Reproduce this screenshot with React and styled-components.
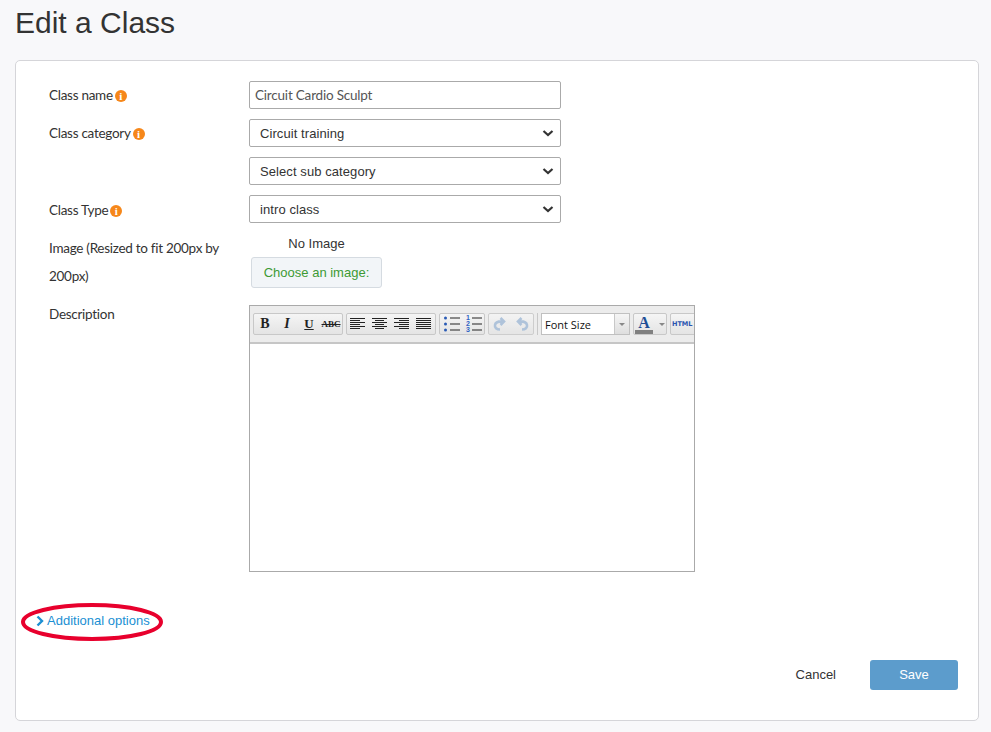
import React from "react";
import styled, { createGlobalStyle } from "styled-components";

const GlobalStyle = createGlobalStyle`
  html, body {
    margin: 0;
    padding: 0;
    background: #f8f8fa;
    font-family: "Liberation Sans", Arial, sans-serif;
    color: #333;
  }
  * { box-sizing: border-box; }
`;

const Page = styled.div`
  width: 991px;
  height: 732px;
  padding: 0 12px 0 15px;
  overflow: hidden;
`;

const Title = styled.h1`
  margin: 0;
  height: 60px;
  padding-top: 5px;
  font-size: 30px;
  line-height: 36px;
  font-weight: 400;
  color: #333;
`;

const Card = styled.div`
  position: relative;
  height: 661px;
  background: #fff;
  border: 1px solid #d5d5d9;
  border-radius: 5px;
  padding: 20px 0 0 33px;
`;

const Form = styled.div`
  display: flex;
  flex-direction: column;
  gap: 10px;
`;

const Row = styled.div`
  display: grid;
  grid-template-columns: 200px 1fr;
  align-items: ${props => (props.top ? "start" : "center")};
  margin-top: ${props => props.offset || 0}px;
`;

const Label = styled.label`
  display: block;
  font-family: Lato, sans-serif;
  font-size: 13.5px;
  line-height: ${props => props.lh || 20}px;
  color: #333;
  letter-spacing: -0.28px;
  padding-top: ${props => props.shift || 0}px;
  margin-top: ${props => props.rise || 0}px;
`;

const Info = styled.span`
  display: inline-block;
  vertical-align: 0;
  margin-left: 2px;
  width: 12px;
  height: 12px;
  border-radius: 50%;
  background: #f6871a;
  color: #fff;
  font: 700 11px/12px "Liberation Serif", serif;
  letter-spacing: 0;
  text-align: center;
`;

const TextInput = styled.div`
  width: 312px;
  height: 28px;
  border: 1px solid #aaa;
  border-radius: 2px;
  padding: 0 5px;
  font-family: Lato, sans-serif;
  font-size: 13.5px;
  letter-spacing: -0.2px;
  line-height: 26px;
  color: #555;
`;

const Select = styled.div`
  width: 312px;
  height: 28px;
  border: 1px solid #aaa;
  border-radius: 2px;
  padding: 0 6px 0 10px;
  display: flex;
  align-items: center;
  justify-content: space-between;
  font-size: 13px;
  letter-spacing: 0.08px;
  color: #333;
`;

const ImageCol = styled.div`
  display: flex;
  flex-direction: column;
  align-items: flex-start;
`;

const NoImage = styled.div`
  width: 135px;
  text-align: center;
  font-size: 13px;
  line-height: 20px;
  margin-bottom: 3px;
  color: #333;
`;

const ChooseButton = styled.button`
  margin-left: 2px;
  width: 131px;
  height: 31px;
  background: #f2f5f8;
  border: 1px solid #d5dbe1;
  border-radius: 3px;
  font-family: "Liberation Sans", Arial, sans-serif;
  font-size: 13px;
  color: #3d9a34;
  padding: 0;
`;

const Editor = styled.div`
  width: 446px;
  height: 267px;
  border: 1px solid #aaa;
  display: flex;
  flex-direction: column;
`;

const Toolbar = styled.div`
  height: 38px;
  flex: none;
  background: #ececec;
  border-bottom: 2px solid #c6c6c6;
  padding: 7px 0 0 3px;
  display: flex;
  gap: 3px;
  overflow: hidden;
`;

const Group = styled.div`
  display: flex;
  height: 22px;
  width: ${props => props.w}px;
  flex: none;
  border: 1px solid #c8c8c8;
  border-radius: 2px;
  background: linear-gradient(#f5f5f5, #e4e4e4);
  align-items: center;
  justify-content: space-around;
  opacity: ${props => (props.off ? 0.85 : 1)};
`;

const Glyph = styled.span`
  width: 22px;
  text-align: center;
  font-family: "Liberation Serif", serif;
  font-size: ${props => props.size || 13}px;
  font-weight: 700;
  font-style: ${props => (props.italic ? "italic" : "normal")};
  text-decoration: ${props => props.deco || "none"};
  color: #222;
  line-height: 20px;
`;

const Divider = styled.div`
  width: 1px;
  height: 22px;
  background: #c8c8c8;
  flex: none;
`;

const FontSelect = styled.div`
  width: 89px;
  height: 22px;
  flex: none;
  border: 1px solid #c0c0c0;
  background: #fff;
  display: flex;
  font-family: "Open Sans", sans-serif;
  font-size: 11px;
  line-height: 22px;
  color: #111;
`;

const FontName = styled.span`
  flex: 1;
  padding-left: 3px;
`;

const FontArrow = styled.span`
  width: 15px;
  background: linear-gradient(#f5f5f5, #dedede);
  border-left: 1px solid #c8c8c8;
  display: flex;
  align-items: center;
  justify-content: center;
  &::after {
    content: "";
    border: 3px solid transparent;
    border-top: 3px solid #888;
    margin-top: 3px;
  }
`;

const ColorGroup = styled(Group)`
  justify-content: flex-start;
  padding-left: 1px;
  gap: 6px;
`;

const ColorA = styled.span`
  width: 18px;
  font: 700 16px/15px "Liberation Serif", serif;
  color: #1f4f96;
  text-align: center;
  border-bottom: 4px solid #808080;
`;

const SmallArrow = styled.span`
  border: 3px solid transparent;
  border-top: 3px solid #888;
  margin-top: 3px;
`;

const HtmlGroup = styled(Group)`
  justify-content: flex-start;
  padding-left: 1px;
`;

const HtmlTag = styled.span`
  font: 700 6.5px/20px "DejaVu Sans", sans-serif;
  color: #2a55b0;
`;

const EditorBody = styled.div`
  flex: 1;
  background: #fff;
`;

const OptionsLink = styled.a`
  display: flex;
  align-items: center;
  gap: 3px;
  margin: 39px 0 0 -14px;
  font-size: 13px;
  line-height: 20px;
  color: #1b8fd3;
  cursor: pointer;
`;

const Ellipse = styled.svg`
  position: absolute;
  left: 4px;
  top: 541px;
`;

const Footer = styled.div`
  display: flex;
  justify-content: flex-end;
  align-items: center;
  gap: 34px;
  margin: 29px 20px 0 0;
`;

const CancelLink = styled.a`
  font-size: 13px;
  line-height: 28px;
  color: #333;
`;

const SaveButton = styled.button`
  width: 88px;
  height: 30px;
  border: none;
  border-radius: 3px;
  background: #5c9ccc;
  color: #fff;
  font-family: "Liberation Sans", Arial, sans-serif;
  font-size: 13px;
  padding: 0 0 2px;
`;

const Chevron = () => (
  <svg width="12" height="12" viewBox="0 0 12 12">
    <path d="M1.5 4l4.5 4 4.5-4" fill="none" stroke="#333" strokeWidth="2.2" />
  </svg>
);

const LinkChevron = () => (
  <svg width="9" height="12" viewBox="0 0 9 12">
    <path d="M2.5 1.5L7 6l-4.500 4.500" fill="none" stroke="#1b8fd3" strokeWidth="2.4" />
  </svg>
);

const AlignIcon = ({ lines }) => (
  <svg width="16" height="14" viewBox="0 0 16 14">
    {lines.map(([x, w], i) => (
      <rect key={i} x={x} y={1 + i * 2} width={w} height="1" fill="#222" />
    ))}
  </svg>
);

const ListIcon = ({ numbered }) => (
  <svg width="17" height="18" viewBox="0 0 17 18">
    {[1, 7, 13].map((y, i) => (
      <g key={y}>
        {numbered
          ? <text x="1" y={y + 4} fontSize="7" fontWeight="700" fontFamily="Liberation Sans" fill="#2f62c4">{i + 1}</text>
          : <circle cx="2.500" cy={y + 2} r="1.500" fill="#2a5bb5" />}
        <rect x="7" y={y + 1.500} width="10" height="1" fill="#222" />
      </g>
    ))}
  </svg>
);

const ArrowIcon = ({ flip }) => (
  <svg width="14" height="14" viewBox="0 0 14 14" style={flip ? { transform: "scaleX(-1)" } : undefined}>
    <path d="M7 12.500c3.500 0 5.500-2 5-4.500S8.500 4 3.500 4.500M6.500 1L3 4.500 6.500 8" fill="none" stroke="#a5bdd8" strokeWidth="2.600" />
  </svg>
);

const alignments = [
  [[0, 15], [0, 10], [0, 15], [0, 10], [0, 15], [0, 10]],
  [[0, 15], [3, 9], [0, 15], [3, 9], [0, 15], [3, 9]],
  [[0, 15], [5, 10], [0, 15], [5, 10], [0, 15], [5, 10]],
  [[0, 15], [0, 15], [0, 15], [0, 15], [0, 15], [0, 15]],
];

export default function App() {
  return (
    <Page>
      <GlobalStyle />
      <Title>Edit a Class</Title>
      <Card>
        <Form>
          <Row>
            <Label>Class name<Info>i</Info></Label>
            <TextInput>Circuit Cardio Sculpt</TextInput>
          </Row>
          <Row>
            <Label>Class category<Info>i</Info></Label>
            <Select>Circuit training<Chevron /></Select>
          </Row>
          <Row>
            <span />
            <Select>Select sub category<Chevron /></Select>
          </Row>
          <Row>
            <Label shift={1}>Class Type<Info>i</Info></Label>
            <Select>intro class<Chevron /></Select>
          </Row>
          <Row top offset={1}>
            <Label lh={28}>Image (Resized to fit 200px by<br />200px)</Label>
            <ImageCol>
              <NoImage>No Image</NoImage>
              <ChooseButton>Choose an image:</ChooseButton>
            </ImageCol>
          </Row>
          <Row top offset={5}>
            <Label rise={-1}>Description</Label>
            <Editor>
              <Toolbar>
                <Group w={90}>
                  <Glyph size={14}>B</Glyph>
                  <Glyph size={14} italic>I</Glyph>
                  <Glyph size={13} deco="underline">U</Glyph>
                  <Glyph size={9} deco="line-through">ABC</Glyph>
                </Group>
                <Group w={90}>
                  {alignments.map((lines, i) => <AlignIcon key={i} lines={lines} />)}
                </Group>
                <Group w={46}>
                  <ListIcon />
                  <ListIcon numbered />
                </Group>
                <Group w={46} off>
                  <ArrowIcon flip />
                  <ArrowIcon />
                </Group>
                <Divider />
                <FontSelect>
                  <FontName>Font Size</FontName>
                  <FontArrow />
                </FontSelect>
                <ColorGroup w={34}>
                  <ColorA>A</ColorA>
                  <SmallArrow />
                </ColorGroup>
                <HtmlGroup w={26}>
                  <HtmlTag>HTML</HtmlTag>
                </HtmlGroup>
              </Toolbar>
              <EditorBody />
            </Editor>
          </Row>
        </Form>
        <OptionsLink>
          <LinkChevron />
          Additional options
        </OptionsLink>
        <Ellipse width="144" height="40" viewBox="0 0 144 40">
          <ellipse cx="72" cy="20" rx="69" ry="17" fill="none" stroke="#e8002d" strokeWidth="4" />
        </Ellipse>
        <Footer>
          <CancelLink>Cancel</CancelLink>
          <SaveButton>Save</SaveButton>
        </Footer>
      </Card>
    </Page>
  );
}
